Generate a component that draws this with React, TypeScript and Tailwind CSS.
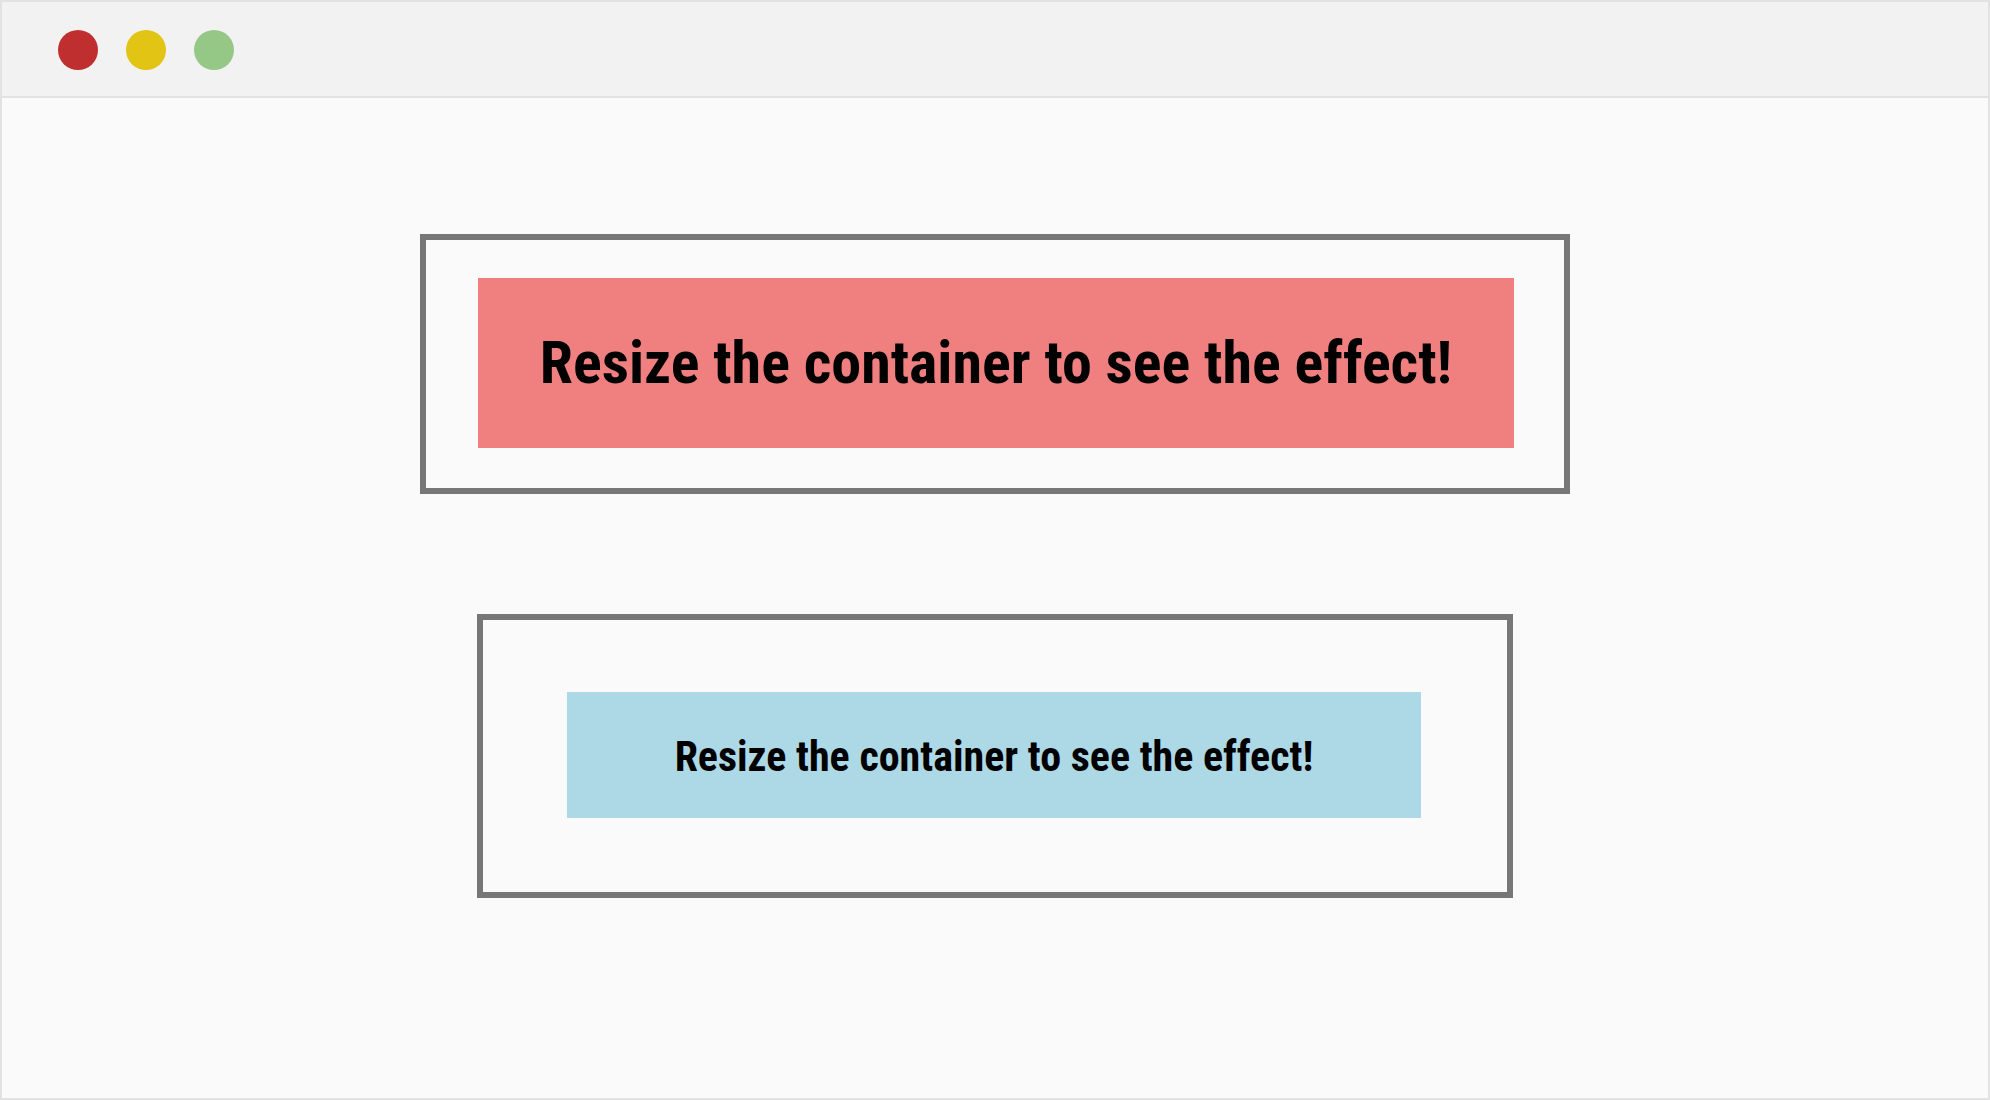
export default function App() {
  return (
    <div className="w-[1990px] h-[1100px] flex flex-col border-2 border-[#e2e2e2] bg-[#fafafa]">
      {/* window title bar */}
      <div className="h-[96px] shrink-0 flex items-center gap-[28px] pl-[56px] pt-[2px] bg-[#f2f2f2] border-b-2 border-[#e2e2e2]">
        <span className="w-10 h-10 rounded-full bg-[#bf2f2f]" />
        <span className="w-10 h-10 rounded-full bg-[#e1c414]" />
        <span className="w-10 h-10 rounded-full bg-[#95c886]" />
      </div>

      <div className="flex-1 flex flex-col items-center pt-[136px] gap-[120px] font-['Roboto',sans-serif] font-bold [font-stretch:condensed] text-black">
        <div className="w-[1150px] h-[260px] border-[6px] border-[#777777] pt-[38px] pl-[52px]">
          <div className="w-[1036px] h-[170px] flex items-center justify-center bg-[#f08080]">
            <span className="text-[60px] leading-none">Resize the container to see the effect!</span>
          </div>
        </div>

        <div className="w-[1036px] h-[284px] border-[6px] border-[#777777] pt-[72px] pl-[84px]">
          <div className="w-[854px] h-[126px] flex items-center justify-center bg-[#add8e6]">
            <span className="text-[42px] leading-none pt-[3px]">Resize the container to see the effect!</span>
          </div>
        </div>
      </div>
    </div>
  );
}
